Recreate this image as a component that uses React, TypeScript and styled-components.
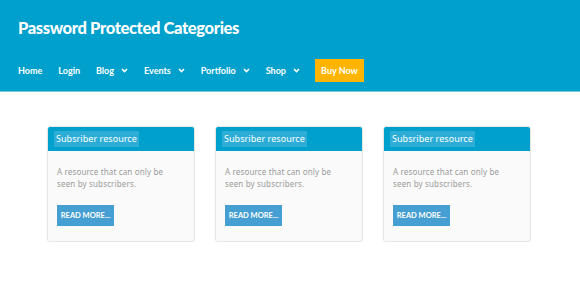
import React from 'react';
import styled, { createGlobalStyle } from 'styled-components';

const GlobalStyle = createGlobalStyle`
  html, body {
    margin: 0;
    padding: 0;
    background: #ffffff;
    font-family: 'Lato', 'Liberation Sans', sans-serif;
  }
`;

interface INavItem {
  label: string;
  dropdown?: boolean;
}

const navItems: INavItem[] = [
  { label: 'Home' },
  { label: 'Login' },
  { label: 'Blog', dropdown: true },
  { label: 'Events', dropdown: true },
  { label: 'Portfolio', dropdown: true },
  { label: 'Shop', dropdown: true },
];

const cards = [1, 2, 3].map((id) => ({
  id,
  title: 'Subsriber resource',
  text: 'A resource that can only be seen by subscribers.',
}));

/** 화살표 아이콘 */
const Chevron = () => (
  <svg width="7" height="5" viewBox="0 0 7 5">
    <path d="M1 1 L3.5 3.5 L6 1" stroke="#fff" strokeWidth="1.6" fill="none" />
  </svg>
);

const App = () => (
  <>
    <GlobalStyle />
    <Header>
      <SiteTitle>Password Protected Categories</SiteTitle>
      <Nav>
        {navItems.map((item) => (
          <NavItem key={item.label}>
            {item.label}
            {item.dropdown && <Chevron />}
          </NavItem>
        ))}
        <BuyButton>Buy Now</BuyButton>
      </Nav>
    </Header>
    <Content>
      {cards.map((card) => (
        <Card key={card.id}>
          <CardHead>
            <CardTitle>{card.title}</CardTitle>
          </CardHead>
          <CardBody>
            <CardText>{card.text}</CardText>
            <ReadMore>READ MORE...</ReadMore>
          </CardBody>
        </Card>
      ))}
    </Content>
  </>
);

export default App;

const Header = styled.header`
  background: #00a0cd;
  height: 91px;
  border-bottom: 1px solid #7cc9e3;
  padding: 0 18px;
  box-sizing: content-box;
  display: flex;
  flex-direction: column;
`;

const SiteTitle = styled.h1`
  margin: 16px 0 0;
  color: #ffffff;
  font-family: 'Lato', sans-serif;
  font-size: 16.5px;
  font-weight: 900;
  letter-spacing: -0.35px;
  line-height: 24px;
`;

const Nav = styled.nav`
  display: flex;
  align-items: center;
  margin-top: 19px;
  height: 23px;
`;

const NavItem = styled.span`
  display: flex;
  align-items: center;
  gap: 7px;
  color: #ffffff;
  font-family: 'Lato', sans-serif;
  font-size: 9px;
  font-weight: 700;
  margin-right: 16px;
`;

const BuyButton = styled.span`
  display: flex;
  align-items: center;
  justify-content: center;
  background: #ffb500;
  color: #ffffff;
  font-family: 'Lato', sans-serif;
  font-size: 9px;
  font-weight: 700;
  width: 49px;
  height: 23px;
  margin-left: -1px;
`;

const Content = styled.main`
  display: flex;
  gap: 20px;
  padding: 34px 0 0 47px;
`;

const Card = styled.div`
  width: 146px;
  height: 114px;
  background: #fafafa;
  border: 1px solid #e6e6e6;
  border-radius: 3px;
  overflow: hidden;
  box-shadow: 0 1px 2px rgba(0, 0, 0, 0.04);
`;

const CardHead = styled.div`
  background: #00a0cd;
  height: 24px;
  display: flex;
  align-items: center;
  padding: 0 6px;
`;

const CardTitle = styled.span`
  background: #2dadd6;
  color: #ffffff;
  font-family: 'Noto Sans', sans-serif;
  font-size: 9px;
  letter-spacing: 0.05px;
  padding: 2px 2px;
  line-height: 12px;
`;

const CardBody = styled.div`
  padding: 15px 28px 0 9px;
`;

const CardText = styled.p`
  margin: 0;
  color: #9a9a9a;
  font-family: 'Noto Sans', sans-serif;
  font-size: 8px;
  line-height: 12px;
  letter-spacing: 0.15px;
`;

const ReadMore = styled.span`
  display: inline-flex;
  align-items: center;
  justify-content: center;
  margin-top: 15px;
  width: 57px;
  height: 21px;
  background: #469fd2;
  color: #ffffff;
  font-family: 'Lato', sans-serif;
  font-size: 7.5px;
  font-weight: 700;
`;
